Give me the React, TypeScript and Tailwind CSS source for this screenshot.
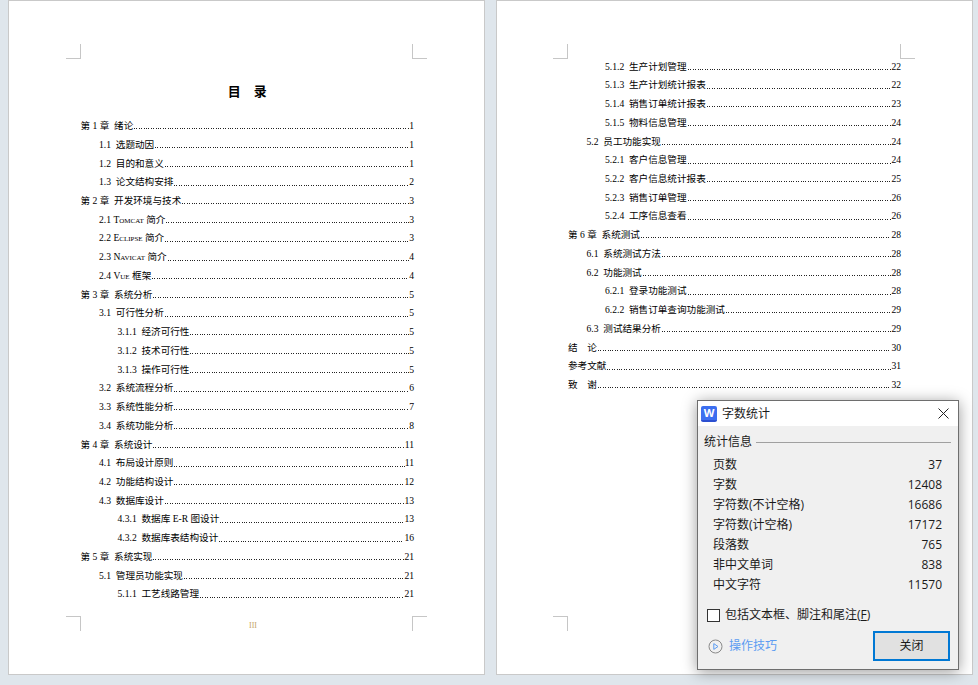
const cjk = "font-['Liberation_Serif','Noto_Sans_CJK_SC',serif]";

const PAGE_ONE: [number, React.ReactNode, string][] = [
  [0, '第 1 章  绪论', '1'],
  [1, '1.1  选题动因', '1'],
  [1, '1.2  目的和意义', '1'],
  [1, '1.3  论文结构安排', '2'],
  [0, '第 2 章  开发环境与技术', '3'],
  [1, <>2.1 <span className="[font-variant-caps:small-caps]">Tomcat</span> 简介</>, '3'],
  [1, <>2.2 <span className="[font-variant-caps:small-caps]">Eclipse</span> 简介</>, '3'],
  [1, <>2.3 <span className="[font-variant-caps:small-caps]">Navicat</span> 简介</>, '4'],
  [1, <>2.4 <span className="[font-variant-caps:small-caps]">Vue</span> 框架</>, '4'],
  [0, '第 3 章  系统分析', '5'],
  [1, '3.1  可行性分析', '5'],
  [2, '3.1.1  经济可行性', '5'],
  [2, '3.1.2  技术可行性', '5'],
  [2, '3.1.3  操作可行性', '5'],
  [1, '3.2  系统流程分析', '6'],
  [1, '3.3  系统性能分析', '7'],
  [1, '3.4  系统功能分析', '8'],
  [0, '第 4 章  系统设计', '11'],
  [1, '4.1  布局设计原则', '11'],
  [1, '4.2  功能结构设计', '12'],
  [1, '4.3  数据库设计', '13'],
  [2, '4.3.1  数据库 E-R 图设计', '13'],
  [2, '4.3.2  数据库表结构设计', '16'],
  [0, '第 5 章  系统实现', '21'],
  [1, '5.1  管理员功能实现', '21'],
  [2, '5.1.1  工艺线路管理', '21'],
];

const PAGE_TWO: [number, React.ReactNode, string][] = [
  [2, '5.1.2  生产计划管理', '22'],
  [2, '5.1.3  生产计划统计报表', '22'],
  [2, '5.1.4  销售订单统计报表', '23'],
  [2, '5.1.5  物料信息管理', '24'],
  [1, '5.2  员工功能实现', '24'],
  [2, '5.2.1  客户信息管理', '24'],
  [2, '5.2.2  客户信息统计报表', '25'],
  [2, '5.2.3  销售订单管理', '26'],
  [2, '5.2.4  工序信息查看', '26'],
  [0, '第 6 章  系统测试', '28'],
  [1, '6.1  系统测试方法', '28'],
  [1, '6.2  功能测试', '28'],
  [2, '6.2.1  登录功能测试', '28'],
  [2, '6.2.2  销售订单查询功能测试', '29'],
  [1, '6.3  测试结果分析', '29'],
  [0, '结　论', '30'],
  [0, '参考文献', '31'],
  [0, '致　谢', '32'],
];

const STATS = [
  ['页数', '37'],
  ['字数', '12408'],
  ['字符数(不计空格)', '16686'],
  ['字符数(计空格)', '17172'],
  ['段落数', '765'],
  ['非中文单词', '838'],
  ['中文字符', '11570'],
];

function TocRow({ level, label, page }: { level: number; label: React.ReactNode; page: string }) {
  const indent = level === 2 ? 'pl-[37px]' : level === 1 ? 'pl-[18.5px]' : 'pl-0';
  return (
    <div className={`flex h-[18.74px] items-center whitespace-pre text-[9.6px] leading-none text-black ${indent}`}>
      <span className="shrink-0">{label}</span>
      {/* tab leader */}
      <span className="mt-[6px] ml-[1px] h-px min-w-0 flex-1 bg-[repeating-linear-gradient(to_right,#222_0,#222_1px,transparent_1px,transparent_2.4px)]" />
      <span className="shrink-0">{page}</span>
    </div>
  );
}

function CropMarks({ page }: { page: 'left' | 'right' }) {
  const l = page === 'left' ? 'left-[57px]' : 'left-[56px]';
  return (
    <>
      <div className={`absolute top-[43px] ${l} h-[15px] w-[15px] border-r border-b border-[#c6c6c6]`} />
      <div className={`absolute top-[43px] right-[57px] h-[15px] w-[15px] border-b border-l border-[#c6c6c6]`} />
      <div className={`absolute top-[615px] ${l} h-[15px] w-[15px] border-t border-r border-[#c6c6c6]`} />
      <div className={`absolute top-[615px] right-[57px] h-[15px] w-[15px] border-t border-l border-[#c6c6c6]`} />
    </>
  );
}

function WordCountDialog() {
  return (
    <div className="absolute top-[400px] left-[697px] flex h-[270px] w-[262px] flex-col border border-[#6e6e6e] bg-[#f0f0f0] font-['Open_Sans','Noto_Sans_CJK_SC',sans-serif] text-[12px] text-[#1a1a1a] shadow-[0_2px_14px_rgba(0,0,0,0.4)]">
      <div className="flex h-[25px] shrink-0 items-center bg-white pr-[9px] pl-[3px]">
        <div className="flex h-[16px] w-[16px] items-center justify-center rounded-[2px] border-b-2 border-[#2b4fd0] bg-[#3c6ff0] text-[11px] leading-none font-bold text-white">
          W
        </div>
        <span className="ml-[5px] flex-1">字数统计</span>
        <svg width="11" height="11" viewBox="0 0 11 11" fill="none" stroke="#222" strokeWidth="1">
          <path d="M0.5 0.5 L10.5 10.5 M10.5 0.5 L0.5 10.5" />
        </svg>
      </div>
      <div className="flex flex-1 flex-col pt-[6px] pr-[7px] pl-[6px]">
        <div className="flex h-[20px] items-center gap-[4px]">
          <span>统计信息</span>
          <div className="h-px flex-1 bg-[#a0a0a0]" />
        </div>
        <div className="mt-[3px] pr-[9px] pl-[9px]">
          {STATS.map(([name, value]) => (
            <div key={name} className="flex h-[20px] items-center justify-between">
              <span>{name}</span>
              <span>{value}</span>
            </div>
          ))}
        </div>
        <div className="mt-[10px] flex h-[20px] items-center pl-[3px]">
          <div className="h-[13px] w-[13px] border border-[#333] bg-white" />
          <span className="ml-[5px]">
            包括文本框、脚注和尾注(<span className="underline">F</span>)
          </span>
        </div>
        <div className="mt-[6px] flex items-center justify-between pr-[1px] pl-[4px]">
          <div className="flex items-center gap-[6px] text-[#5b9cf2]">
            <svg width="15" height="15" viewBox="0 0 15 15" fill="none">
              <circle cx="7.5" cy="7.5" r="6.5" stroke="#8a8a8a" />
              <path d="M5.8 4.6 L10 7.5 L5.8 10.4 Z" stroke="#5b9cf2" />
            </svg>
            <span>操作技巧</span>
          </div>
          <button className="flex h-[30px] w-[77px] items-center justify-center border-2 border-[#0078d4] bg-[#e1e1e1]">
            关闭
          </button>
        </div>
      </div>
    </div>
  );
}

export default function App() {
  return (
    <div className={`relative flex h-[685px] w-[978px] gap-[11px] overflow-hidden bg-[#dfe6ec] pl-[8px] ${cjk}`}>
      <div className="relative h-[675px] w-[477px] border border-[#c9c9c9] bg-white pt-[81px] pr-[70px] pl-[71.5px]">
        <CropMarks page="left" />
        <div className="mb-[15.5px] flex h-[19px] items-center justify-center text-[13px] font-bold text-black">目　录</div>
        {PAGE_ONE.map(([level, label, page], i) => (
          <TocRow key={i} level={level} label={label} page={page} />
        ))}
        <div className="absolute top-[620px] left-[240px] text-[8px] leading-[10px] text-[#c4a465]">III</div>
      </div>
      <div className="relative h-[675px] w-[477px] border border-[#c9c9c9] bg-white pt-[56px] pr-[71px] pl-[71px]">
        <CropMarks page="right" />
        {PAGE_TWO.map(([level, label, page], i) => (
          <TocRow key={i} level={level} label={label} page={page} />
        ))}
      </div>
      <WordCountDialog />
    </div>
  );
}
